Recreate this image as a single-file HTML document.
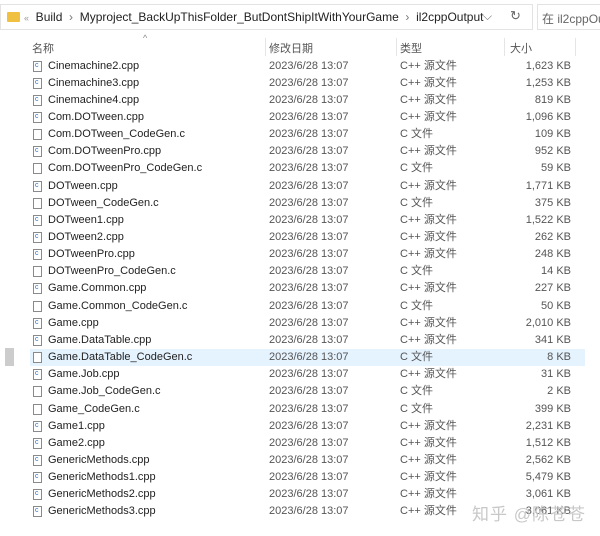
<!DOCTYPE html><html><head><style>
body{margin:0;width:600px;height:536px;background:#fff;font-family:"Liberation Sans","Noto Sans CJK SC",sans-serif;font-size:11px;color:#222;position:relative;overflow:hidden}
.a{position:absolute;white-space:nowrap}
.row{position:absolute;left:30px;width:555px;height:17px;line-height:17px;white-space:nowrap}
.row span{position:absolute}
.ic{position:absolute;left:3px;top:3px;width:9px;height:11px;border:1px solid #8a8a8a;box-sizing:border-box;background:#fff}
.ic.c:after{content:"c";position:absolute;left:1px;top:-5px;font-size:7px;color:#2a6fb5}
</style></head><body>
<div class="a" style="left:0;top:4px;width:533px;height:26px;border:1px solid #e3e3e3;box-sizing:border-box"></div>
<div class="a" style="left:537px;top:4px;width:70px;height:26px;border:1px solid #e3e3e3;box-sizing:border-box"></div>
<div class="a" style="left:7px;top:12px;width:13px;height:10px;background:#f0c140;border-radius:1px"></div>
<div class="a" style="left:24px;top:9px;font-size:12px;line-height:16px;color:#222"><span style="color:#999;font-size:9px">«</span>&nbsp; Build &nbsp;<span style="color:#777">›</span>&nbsp; Myproject_BackUpThisFolder_ButDontShipItWithYourGame &nbsp;<span style="color:#777">›</span>&nbsp; il2cppOutput</div>
<div class="a" style="left:483px;top:9px;color:#777;font-size:12px">⌵</div>
<div class="a" style="left:510px;top:8px;color:#666;font-size:13px">↻</div>
<div class="a" style="left:542px;top:10px;color:#666;font-size:12px">在 il2cppOutput</div>
<div class="a" style="left:143px;top:33px;color:#888;font-size:9px">^</div>
<div class="a" style="left:32px;top:41px;color:#555;line-height:16px">名称</div>
<div class="a" style="left:269px;top:41px;color:#555;line-height:16px">修改日期</div>
<div class="a" style="left:400px;top:41px;color:#555;line-height:16px">类型</div>
<div class="a" style="left:510px;top:41px;color:#555;line-height:16px">大小</div>
<div class="a" style="left:265px;top:38px;width:1px;height:18px;background:#e5e5e5"></div>
<div class="a" style="left:396px;top:38px;width:1px;height:18px;background:#e5e5e5"></div>
<div class="a" style="left:504px;top:38px;width:1px;height:18px;background:#e5e5e5"></div>
<div class="a" style="left:575px;top:38px;width:1px;height:18px;background:#e5e5e5"></div>
<div class="a" style="left:5px;top:348px;width:9px;height:18px;background:#ccc"></div>
<div id="rows"></div>
<div class="a" style="left:472px;top:500px;font-size:17px;color:#c8c8c8;letter-spacing:1px">知乎 @陈苍苍</div>
<script>
var d=[["Cinemachine2.cpp",1,"1,623"],["Cinemachine3.cpp",1,"1,253"],["Cinemachine4.cpp",1,"819"],["Com.DOTween.cpp",1,"1,096"],["Com.DOTween_CodeGen.c",0,"109"],["Com.DOTweenPro.cpp",1,"952"],["Com.DOTweenPro_CodeGen.c",0,"59"],["DOTween.cpp",1,"1,771"],["DOTween_CodeGen.c",0,"375"],["DOTween1.cpp",1,"1,522"],["DOTween2.cpp",1,"262"],["DOTweenPro.cpp",1,"248"],["DOTweenPro_CodeGen.c",0,"14"],["Game.Common.cpp",1,"227"],["Game.Common_CodeGen.c",0,"50"],["Game.cpp",1,"2,010"],["Game.DataTable.cpp",1,"341"],["Game.DataTable_CodeGen.c",0,"8"],["Game.Job.cpp",1,"31"],["Game.Job_CodeGen.c",0,"2"],["Game_CodeGen.c",0,"399"],["Game1.cpp",1,"2,231"],["Game2.cpp",1,"1,512"],["GenericMethods.cpp",1,"2,562"],["GenericMethods1.cpp",1,"5,479"],["GenericMethods2.cpp",1,"3,061"],["GenericMethods3.cpp",1,"3,061"]];
var h="";d.forEach(function(r,i){var t=57.5+i*17.15;
h+='<div class="row" style="top:'+t+'px;'+(i==17?'background:#e5f3ff;':'')+'"><div class="ic'+(r[1]?' c':'')+'"></div><span style="left:18px">'+r[0]+'</span><span style="left:239px;color:#555">2023/6/28 13:07</span><span style="left:370px;color:#555">'+(r[1]?'C++ 源文件':'C 文件')+'</span><span style="right:14px;color:#555">'+r[2]+' KB</span></div>';});
document.getElementById("rows").innerHTML=h;
</script>
</body></html>
